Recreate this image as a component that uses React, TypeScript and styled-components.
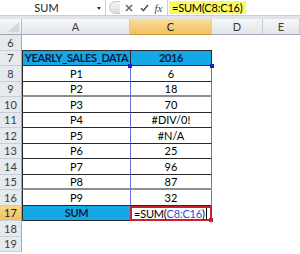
import styled, { createGlobalStyle, css } from 'styled-components'

const GlobalStyle = createGlobalStyle`
  html, body { margin: 0; padding: 0; background: #fff; }
  body { font-family: Lato, "Liberation Sans", sans-serif; font-size: 11px; color: #000; }
  * { box-sizing: border-box; }
`

const Window = styled.div`
  width: 300px;
  height: 254px;
  overflow: hidden;
  background: #fff;
`

const FormulaBar = styled.div`
  display: flex;
  align-items: center;
  height: 16px;
  background: #fff;
  border-bottom: 1px solid #c9ced6;
`

const NameBox = styled.div`
  position: relative;
  display: flex;
  align-items: center;
  justify-content: center;
  width: 106px;
  height: 100%;
  padding-right: 12px;
  border-right: 1px solid #c9ced6;
  color: #222;
  &::after {
    content: '';
    position: absolute;
    right: 4px;
    top: 7px;
    border-left: 2.5px solid transparent;
    border-right: 2.5px solid transparent;
    border-top: 3px solid #333;
  }
`

const Gripper = styled.div`
  width: 11px;
  height: 13px;
  margin-left: 3px;
  border-radius: 7px 0 0 7px;
  background: linear-gradient(#f3f4f6, #d9dde3);
  border: 1px solid #c4c9d0;
  border-right: none;
`

const BarIcon = styled.span<{ $w: number }>`
  display: flex;
  align-items: center;
  justify-content: center;
  width: ${p => p.$w}px;
  color: #555;
`

const Fx = styled.span`
  width: 17px;
  font-family: "Liberation Serif", serif;
  font-style: italic;
  font-size: 11px;
  color: #444;
  text-align: center;
`

const FormulaInput = styled.div`
  flex: 1;
  height: 100%;
  display: flex;
  align-items: center;
  padding-left: 1px;
  border-left: 1px solid #c9ced6;
`

const Highlight = styled.span`
  background: #fafa62;
  padding: 0 4px 0 3px;
  line-height: 13px;
  letter-spacing: -0.2px;
`

const Strip = styled.div`
  height: 3px;
  background: #e1e5ea;
`

const Grid = styled.div`
  display: grid;
  grid-template-columns: 22px 108px 82px 51px 1fr;
  grid-template-rows: 16px;
  grid-auto-rows: 15.5px;
`

const Corner = styled.div`
  position: relative;
  background: linear-gradient(#f4f6f8, #e4e7eb);
  border-right: 1px solid #b8bfc8;
  border-bottom: 1px solid #9fa8b4;
  &::after {
    content: '';
    position: absolute;
    right: 2px;
    bottom: 2px;
    border-left: 11px solid transparent;
    border-bottom: 10px solid #d3d7dd;
  }
`

const ColHead = styled.div<{ $active?: boolean }>`
  display: flex;
  align-items: center;
  justify-content: center;
  color: #3c3c3c;
  border-right: 1px solid #c8cdd4;
  border-bottom: 1px solid #9fa8b4;
  background: linear-gradient(#f4f6f8, #e3e6ea);
  ${p => p.$active && css`
    background: linear-gradient(#f9dc9c, #f1c15e);
    border-bottom-color: #c29a3c;
    color: #222;
  `}
`

const RowHead = styled.div<{ $active?: boolean }>`
  display: flex;
  align-items: center;
  justify-content: center;
  color: #3c3c3c;
  background: #e6e9ee;
  border-right: 1px solid #9fa8b4;
  border-bottom: 1px solid #c9ced6;
  ${p => p.$active && css`
    background: linear-gradient(#f8d884, #f1c15e);
    border-right-color: #c29a3c;
    color: #222;
  `}
`

type Kind = 'blank' | 'head' | 'data'

const Cell = styled.div<{
  $kind: Kind
  $col?: 'A' | 'C'
  $topEdge?: boolean
  $thick?: boolean
  $range?: boolean
  $rangeTop?: boolean
  $edit?: boolean
}>`
  position: relative;
  display: flex;
  align-items: center;
  justify-content: center;
  white-space: nowrap;
  ${p => p.$topEdge && css`border-bottom: 1px solid #2a2a2a;`}
  ${p => p.$kind !== 'blank' && css`
    border-bottom: ${p.$thick ? '2px solid #8d8d8d' : '1px solid #2a2a2a'};
  `}
  ${p => p.$kind === 'head' && css`
    background: #14a8e6;
    color: #0e1c3c;
    font-weight: 700;
    letter-spacing: -0.4px;
  `}
  ${p => p.$kind !== 'blank' && p.$col === 'A' && css`
    border-left: 1px solid #2a2a2a;
  `}
  ${p => p.$kind !== 'blank' && p.$col === 'C' && css`
    border-left: 1px solid ${p.$range ? '#6d6de3' : '#2a2a2a'};
    border-right: 1px solid ${p.$range ? '#6d6de3' : '#2a2a2a'};
  `}
  ${p => p.$rangeTop && css`
    &::before, &::after {
      content: '';
      position: absolute;
      top: -2px;
      width: 4px;
      height: 4px;
      background: #1f1fbf;
    }
    &::before { left: -3px; }
    &::after { right: -3px; }
  `}
  ${p => p.$edit && css`
    justify-content: flex-start;
    padding-left: 2px;
    letter-spacing: -0.2px;
    border: 2px solid #c8202c;
    &::after {
      content: '';
      position: absolute;
      right: -3px;
      bottom: -3px;
      width: 4px;
      height: 4px;
      background: #c8202c;
    }
  `}
`

const Ref = styled.span`
  color: #2f4fd6;
`

const Caret = styled.span`
  display: inline-block;
  width: 1px;
  height: 11px;
  margin-left: 1px;
  background: #000;
`

const XIcon = () => (
  <svg width="8" height="8" viewBox="0 0 8 8">
    <path d="M1 1L7 7M7 1L1 7" stroke="#6a6a6a" strokeWidth="1.6" />
  </svg>
)

const CheckIcon = () => (
  <svg width="9" height="8" viewBox="0 0 9 8">
    <path d="M1 4.2L3.4 6.6L8 1" stroke="#555" strokeWidth="1.6" fill="none" />
  </svg>
)

const rows: { n: number; a: string; c: string }[] = [
  { n: 8, a: 'P1', c: '6' },
  { n: 9, a: 'P2', c: '18' },
  { n: 10, a: 'P3', c: '70' },
  { n: 11, a: 'P4', c: '#DIV/0!' },
  { n: 12, a: 'P5', c: '#N/A' },
  { n: 13, a: 'P6', c: '25' },
  { n: 14, a: 'P7', c: '96' },
  { n: 15, a: 'P8', c: '87' },
  { n: 16, a: 'P9', c: '32' },
]

const thickRows = [9, 15]

const App = () => {
  return (
    <Window>
      <GlobalStyle />
      <FormulaBar>
        <NameBox>SUM</NameBox>
        <Gripper />
        <BarIcon $w={18}><XIcon /></BarIcon>
        <BarIcon $w={12}><CheckIcon /></BarIcon>
        <Fx>fx</Fx>
        <FormulaInput>
          <Highlight>=SUM(C8:C16)</Highlight>
        </FormulaInput>
      </FormulaBar>
      <Strip />
      <Grid>
        <Corner />
        <ColHead>A</ColHead>
        <ColHead $active>C</ColHead>
        <ColHead>D</ColHead>
        <ColHead>E</ColHead>

        <RowHead>6</RowHead>
        <Cell $kind="blank" $topEdge />
        <Cell $kind="blank" $topEdge />
        <Cell $kind="blank" />
        <Cell $kind="blank" />

        <RowHead>7</RowHead>
        <Cell $kind="head" $col="A">YEARLY_SALES_DATA</Cell>
        <Cell $kind="head" $col="C">2016</Cell>
        <Cell $kind="blank" />
        <Cell $kind="blank" />

        {rows.map(r => (
          <Row key={r.n} n={r.n} a={r.a} c={r.c} />
        ))}

        <RowHead $active>17</RowHead>
        <Cell $kind="head" $col="A">SUM</Cell>
        <Cell $kind="data" $col="C" $edit>
          =SUM(<Ref>C8:C16</Ref>)<Caret />
        </Cell>
        <Cell $kind="blank" />
        <Cell $kind="blank" />

        {[18, 19].map(n => (
          <BlankRow key={n} n={n} />
        ))}
      </Grid>
    </Window>
  )
}

const Row = ({ n, a, c }: { n: number; a: string; c: string }) => (
  <>
    <RowHead>{n}</RowHead>
    <Cell $kind="data" $col="A" $thick={thickRows.includes(n)}>{a}</Cell>
    <Cell $kind="data" $col="C" $range $rangeTop={n === 8} $thick={thickRows.includes(n)}>{c}</Cell>
    <Cell $kind="blank" />
    <Cell $kind="blank" />
  </>
)

const BlankRow = ({ n }: { n: number }) => (
  <>
    <RowHead>{n}</RowHead>
    <Cell $kind="blank" />
    <Cell $kind="blank" />
    <Cell $kind="blank" />
    <Cell $kind="blank" />
  </>
)

export default App
